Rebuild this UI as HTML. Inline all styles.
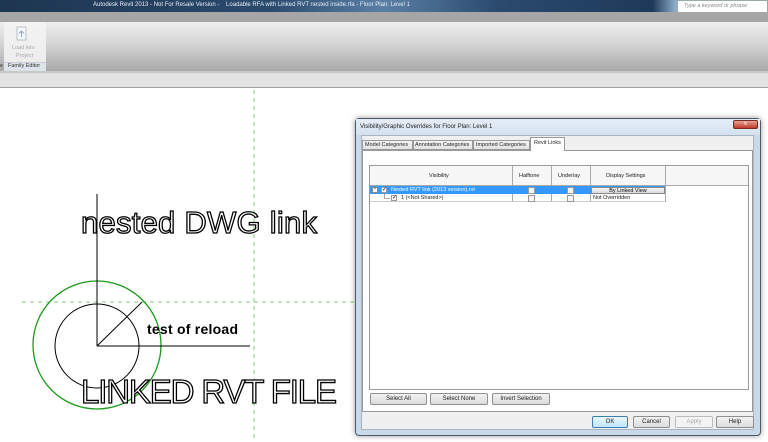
<!DOCTYPE html>
<html><head><style>
*{margin:0;padding:0;box-sizing:border-box}
body{width:768px;height:442px;overflow:hidden;position:relative;background:#fff;font-family:"Liberation Sans",sans-serif}
.a{position:absolute}
.btn{position:absolute;height:12px;border:1px solid #8e8f8f;border-radius:2px;background:linear-gradient(#f2f2f2,#dcdcdc);font-size:6px;text-align:center;line-height:10px;color:#222}
.cb{position:absolute;width:7px;height:7px;border:1px solid #999;background:#f4f4f4;font-size:6px;line-height:5px;text-align:center;color:#000}
.t{font-size:5.5px;color:#222;position:absolute;white-space:nowrap}
</style></head><body>
<div class="a" style="left:0;top:0;width:768px;height:12px;background:linear-gradient(90deg,#1d3550,#2a4a6e 35%,#5a7fa5 50%,#2a4a6e 65%,#1e3a5a 85%,#8fb0cc 88%,#1e3a5a 92%)"></div>
<div class="t" style="left:93px;top:2px;color:#e8eef5;font-size:6px">Autodesk Revit 2013 - Not For Resale Version -&nbsp;&nbsp;&nbsp; Loadable RFA with Linked RVT nested inside.rfa - Floor Plan: Level 1</div>
<div class="a" style="left:677px;top:0;width:91px;height:13px;background:#fff;border:1px solid #9aa"></div>
<div class="t" style="left:684px;top:3px;color:#888;font-style:italic;font-size:5.5px">Type a keyword or phrase</div>
<div class="a" style="left:0;top:12px;width:768px;height:10px;background:#a6a6a6"></div>
<div class="a" style="left:0;top:22px;width:768px;height:49px;background:linear-gradient(#eeeeee,#d8d8d8 40%,#a9a9a9)"></div>
<div class="a" style="left:4px;top:22px;width:42px;height:49px;background:linear-gradient(#f4f4f4,#ebebeb)"></div>
<div class="a" style="left:4px;top:62px;width:42px;height:9px;background:#dde3ea;border-top:1px solid #ccd"></div>
<div class="t" style="left:8px;top:63px;font-size:5.5px;color:#333">Family Editor</div>
<div class="t" style="left:0;top:63px;font-size:5.5px;color:#333">e</div>
<svg class="a" style="left:15px;top:26px" width="14" height="16"><rect x="2" y="1" width="9" height="13" fill="#f4f6f8" stroke="#b8c0c8"/><path d="M6.5 11V5M4 7.5l2.5-2.5 2.5 2.5" fill="none" stroke="#9aa8b8"/></svg>
<div class="t" style="left:12px;top:45px;color:#aaa">Load into</div>
<div class="t" style="left:16px;top:53px;color:#aaa">Project</div>
<div class="a" style="left:0;top:71px;width:768px;height:2px;background:#c8c8c8"></div>
<div class="a" style="left:0;top:73px;width:768px;height:15px;background:#e3e3e3;border-bottom:1px solid #a0a0a0"></div>
<svg class="a" style="left:0;top:89px" width="768" height="353">
<g transform="translate(0,-89)">
<line x1="254" y1="90" x2="254" y2="442" stroke="#7ccf7c" stroke-width="1" stroke-dasharray="4,4"/>
<line x1="22" y1="302" x2="356" y2="302" stroke="#7ccf7c" stroke-width="1" stroke-dasharray="4,4"/>
<circle cx="97" cy="345" r="64" fill="none" stroke="#1a9a1a" stroke-width="1.3"/>
<circle cx="97" cy="346" r="42" fill="none" stroke="#000" stroke-width="1"/>
<line x1="97" y1="194" x2="97" y2="346" stroke="#000"/>
<line x1="97" y1="346" x2="250" y2="346" stroke="#000"/>
<line x1="97" y1="346" x2="142" y2="302" stroke="#000"/>
<text x="81" y="233" font-family="Liberation Sans" font-size="31" fill="#fff" stroke="#000" stroke-width="1.3" textLength="236">nested DWG link</text>
<text x="147" y="334" font-family="Liberation Sans" font-weight="bold" font-size="14" fill="#000" textLength="91">test of reload</text>
<text x="81" y="403" font-family="Liberation Sans" font-size="33" fill="#fff" stroke="#000" stroke-width="1.3" textLength="256">LINKED RVT FILE</text>
</g></svg>
<div class="a" style="left:355px;top:118px;width:406px;height:318px;background:#c9d9ea;border:1px solid #4a5a6a;border-radius:4px;box-shadow:0 0 6px rgba(0,0,0,.4)"></div>
<div class="a" style="left:356px;top:119px;width:404px;height:16px;background:linear-gradient(#e6eef7,#d4e1ef)"></div>
<div class="t" style="left:360px;top:124px;font-size:6px">Visibility/Graphic Overrides for Floor Plan: Level 1</div>
<div class="a" style="left:733px;top:120px;width:25px;height:9px;background:linear-gradient(#e8a090,#c0392b);border:1px solid #7a2a20;border-radius:2px;color:#fff;font-size:6px;text-align:center;line-height:7px">x</div>
<div class="a" style="left:361px;top:135px;width:393px;height:295px;background:#f0f0f0;border:1px solid #a8b4c0"></div>
<div class="a" style="left:362px;top:140px;width:51px;height:10px;background:linear-gradient(#f4f4f4,#e2e2e2);border:1px solid #999"></div>
<div class="t" style="left:365px;top:142px">Model Categories</div>
<div class="a" style="left:413px;top:140px;width:60px;height:10px;background:linear-gradient(#f4f4f4,#e2e2e2);border:1px solid #999"></div>
<div class="t" style="left:415px;top:142px">Annotation Categories</div>
<div class="a" style="left:473px;top:140px;width:57px;height:10px;background:linear-gradient(#f4f4f4,#e2e2e2);border:1px solid #999"></div>
<div class="t" style="left:476px;top:142px">Imported Categories</div>
<div class="a" style="left:362px;top:150px;width:391px;height:262px;background:#fff;border:1px solid #999"></div>
<div class="a" style="left:530px;top:137px;width:35px;height:14px;background:#fff;border:1px solid #999;border-bottom:none"></div>
<div class="t" style="left:534px;top:140px">Revit Links</div>
<div class="a" style="left:369px;top:165px;width:380px;height:225px;background:#fff;border:1px solid #9a9a9a"></div>
<div class="a" style="left:370px;top:166px;width:378px;height:20px;background:#f7f7f7;border-bottom:1px solid #aaa"></div>
<div class="a" style="left:512px;top:166px;width:1px;height:36px;background:#aaa"></div>
<div class="a" style="left:551px;top:166px;width:1px;height:36px;background:#aaa"></div>
<div class="a" style="left:590px;top:166px;width:1px;height:36px;background:#aaa"></div>
<div class="a" style="left:665px;top:166px;width:1px;height:36px;background:#aaa"></div>
<div class="t" style="left:429px;top:173px">Visibility</div>
<div class="t" style="left:519px;top:173px">Halftone</div>
<div class="t" style="left:558px;top:173px">Underlay</div>
<div class="t" style="left:606px;top:173px">Display Settings</div>
<div class="a" style="left:370px;top:186px;width:295px;height:8px;background:#3399ff"></div>
<div class="a" style="left:370px;top:194px;width:295px;height:8px;border-bottom:1px solid #ccc"></div>
<div class="a" style="left:372px;top:187px;width:6px;height:6px;border:1px solid #888;background:#fff;font-size:6px;line-height:3px;text-align:center">-</div>
<div class="a" style="left:384px;top:194px;width:1px;height:4px;background:#aaa"></div>
<div class="a" style="left:384px;top:198px;width:6px;height:1px;background:#aaa"></div>
<div class="cb" style="left:381px;top:187px;width:6px;height:6px;background:#fff">✓</div>
<div class="t" style="left:391px;top:187px;color:#fff">Nested RVT link (2013 version).rvt</div>
<div class="cb" style="left:391px;top:195px;width:6px;height:6px;background:#fff">✓</div>
<div class="t" style="left:401px;top:195px">1 (&lt;Not Shared&gt;)</div>
<div class="cb" style="left:528px;top:187px"></div><div class="cb" style="left:567px;top:187px"></div>
<div class="cb" style="left:528px;top:195px"></div><div class="cb" style="left:567px;top:195px"></div>
<div class="a" style="left:591px;top:187px;width:74px;height:7px;background:linear-gradient(#f4f4f4,#dcdcdc);border:1px solid #888;font-size:5.5px;text-align:center;line-height:6px">By Linked View</div>
<div class="t" style="left:593px;top:195px">Not Overridden</div>
<div class="btn" style="left:370px;top:393px;width:57px">Select All</div>
<div class="btn" style="left:430px;top:393px;width:58px">Select None</div>
<div class="btn" style="left:492px;top:393px;width:58px">Invert Selection</div>
<div class="btn" style="left:592px;top:416px;width:36px;border-color:#3c7fb1;background:linear-gradient(#eaf6fd,#bee6fd)">OK</div>
<div class="btn" style="left:633px;top:416px;width:37px">Cancel</div>
<div class="btn" style="left:675px;top:416px;width:38px;color:#aaa;border-color:#bbb;background:#f4f4f4">Apply</div>
<div class="btn" style="left:716px;top:416px;width:38px">Help</div>
</body></html>
